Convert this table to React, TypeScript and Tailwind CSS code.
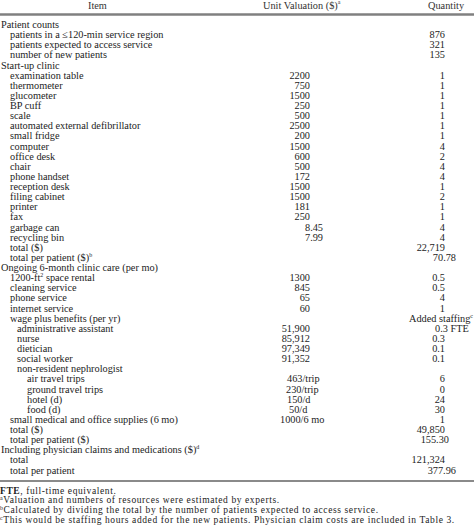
import React from "react";

type Row = {
  ind: string;
  label: React.ReactNode;
  unit?: string;
  uc?: string;
  qty?: React.ReactNode;
  qc?: string;
};

const L0 = "pl-[1px]";
const L1 = "pl-[10px]";
const L2 = "pl-[17px]";
const L3 = "pl-[27px]";

const Sup = ({ children }: { children: React.ReactNode }) => (
  <sup className="text-[6px] relative top-[-1px] align-top leading-none">{children}</sup>
);

const rows: Row[] = [
  { ind: L0, label: "Patient counts" },
  { ind: L1, label: "patients in a \u2264120-min service region", qty: "876" },
  { ind: L1, label: "patients expected to access service", qty: "321" },
  { ind: L1, label: "number of new patients", qty: "135" },
  { ind: L0, label: "Start-up clinic" },
  { ind: L1, label: "examination table", unit: "2200", qty: "1" },
  { ind: L1, label: "thermometer", unit: "750", qty: "1" },
  { ind: L1, label: "glucometer", unit: "1500", qty: "1" },
  { ind: L1, label: "BP cuff", unit: "250", qty: "1" },
  { ind: L1, label: "scale", unit: "500", qty: "1" },
  { ind: L1, label: "automated external defibrillator", unit: "2500", qty: "1" },
  { ind: L1, label: "small fridge", unit: "200", qty: "1" },
  { ind: L1, label: "computer", unit: "1500", qty: "4" },
  { ind: L1, label: "office desk", unit: "600", qty: "2" },
  { ind: L1, label: "chair", unit: "500", qty: "4" },
  { ind: L1, label: "phone handset", unit: "172", qty: "4" },
  { ind: L1, label: "reception desk", unit: "1500", qty: "1" },
  { ind: L1, label: "filing cabinet", unit: "1500", qty: "2" },
  { ind: L1, label: "printer", unit: "181", qty: "1" },
  { ind: L1, label: "fax", unit: "250", qty: "1" },
  { ind: L1, label: "garbage can", unit: "8.45", uc: "text-left pl-[55px]", qty: "4" },
  { ind: L1, label: "recycling bin", unit: "7.99", uc: "text-left pl-[55px]", qty: "4" },
  { ind: L1, label: "total ($)", qty: "22,719" },
  {
    ind: L1,
    label: (
      <>
        total per patient ($)<Sup>b</Sup>
      </>
    ),
    qty: "70.78",
    qc: "text-right pr-[18px]",
  },
  { ind: L0, label: "Ongoing 6-month clinic care (per mo)" },
  {
    ind: L1,
    label: (
      <>
        1200-ft<Sup>2</Sup> space rental
      </>
    ),
    unit: "1300",
    qty: "0.5",
  },
  { ind: L1, label: "cleaning service", unit: "845", qty: "0.5" },
  { ind: L1, label: "phone service", unit: "65", qty: "4" },
  { ind: L1, label: "internet service", unit: "60", qty: "1" },
  {
    ind: L1,
    label: "wage plus benefits (per yr)",
    qty: (
      <>
        Added staffing<Sup>c</Sup>
      </>
    ),
    qc: "text-left pl-[29px] whitespace-nowrap",
  },
  { ind: L2, label: "administrative assistant", unit: "51,900", qty: "0.3 FTE", qc: "text-left pl-[55px] whitespace-nowrap" },
  { ind: L2, label: "nurse", unit: "85,912", qty: "0.3" },
  { ind: L2, label: "dietician", unit: "97,349", qty: "0.1" },
  { ind: L2, label: "social worker", unit: "91,352", qty: "0.1" },
  { ind: L2, label: "non-resident nephrologist" },
  { ind: L3, label: "air travel trips", unit: "463/trip", uc: "text-left pl-[37px]", qty: "6" },
  { ind: L3, label: "ground travel trips", unit: "230/trip", uc: "text-left pl-[36px]", qty: "0" },
  { ind: L3, label: "hotel (d)", unit: "150/d", uc: "text-left pl-[37px]", qty: "24" },
  { ind: L3, label: "food (d)", unit: "50/d", uc: "text-left pl-[39px]", qty: "30" },
  { ind: L1, label: "small medical and office supplies (6 mo)", unit: "1000/6 mo", uc: "text-left pl-[30px]", qty: "1" },
  { ind: L1, label: "total ($)", qty: "49,850" },
  { ind: L1, label: "total per patient ($)", qty: "155.30", qc: "text-right pr-[25px]" },
  {
    ind: L0,
    label: (
      <>
        Including physician claims and medications ($)<Sup>d</Sup>
      </>
    ),
  },
  { ind: L1, label: "total", qty: "121,324" },
  { ind: L1, label: "total per patient", qty: "377.96", qc: "text-right pr-[18px]" },
];

export default function App() {
  return (
    <div
      className="w-[474px] h-[529px] bg-white overflow-hidden text-[#1c1c1c] text-[10.3px]"
      style={{ fontFamily: '"Liberation Serif", "Times New Roman", serif' }}
    >
      <div className="flex h-[13px] leading-[12px] text-[#333]">
        <div className="w-[250px] pl-[88px]">Item</div>
        <div className="w-[130px] pl-[13px] whitespace-nowrap">
          Unit Valuation ($)<Sup>a</Sup>
        </div>
        <div className="flex-1 pl-[48px]">Quantity</div>
      </div>
      <div className="h-[3px] bg-gradient-to-b from-[#b0b0b0] via-[#808080] to-[#b0b0b0]" />
      <div className="pt-[4px]">
        {rows.map((r, i) => (
          <div key={i} className="flex h-[10.14px] leading-[10.14px] whitespace-nowrap">
            <div className={`w-[250px] ${r.ind}`}>{r.label}</div>
            <div className={`w-[130px] ${r.uc ?? "text-right pr-[70px]"}`}>{r.unit}</div>
            <div className={`w-[94px] ${r.qc ?? "text-right pr-[29px]"}`}>{r.qty}</div>
          </div>
        ))}
      </div>
      <div className="mt-[4px] h-[2px] bg-[#8a8a8a]" />
      <div className="pt-[5px] text-[9.5px] leading-[9.7px] tracking-[0.6px] text-[#222] whitespace-nowrap">
        <div>
          <span className="font-bold">FTE</span>, full-time equivalent.
        </div>
        <div>
          <Sup>a</Sup>Valuation and numbers of resources were estimated by experts.
        </div>
        <div>
          <Sup>b</Sup>Calculated by dividing the total by the number of patients expected to access service.
        </div>
        <div>
          <Sup>c</Sup>This would be staffing hours added for the new patients. Physician claim costs are included in Table 3.
        </div>
      </div>
    </div>
  );
}
